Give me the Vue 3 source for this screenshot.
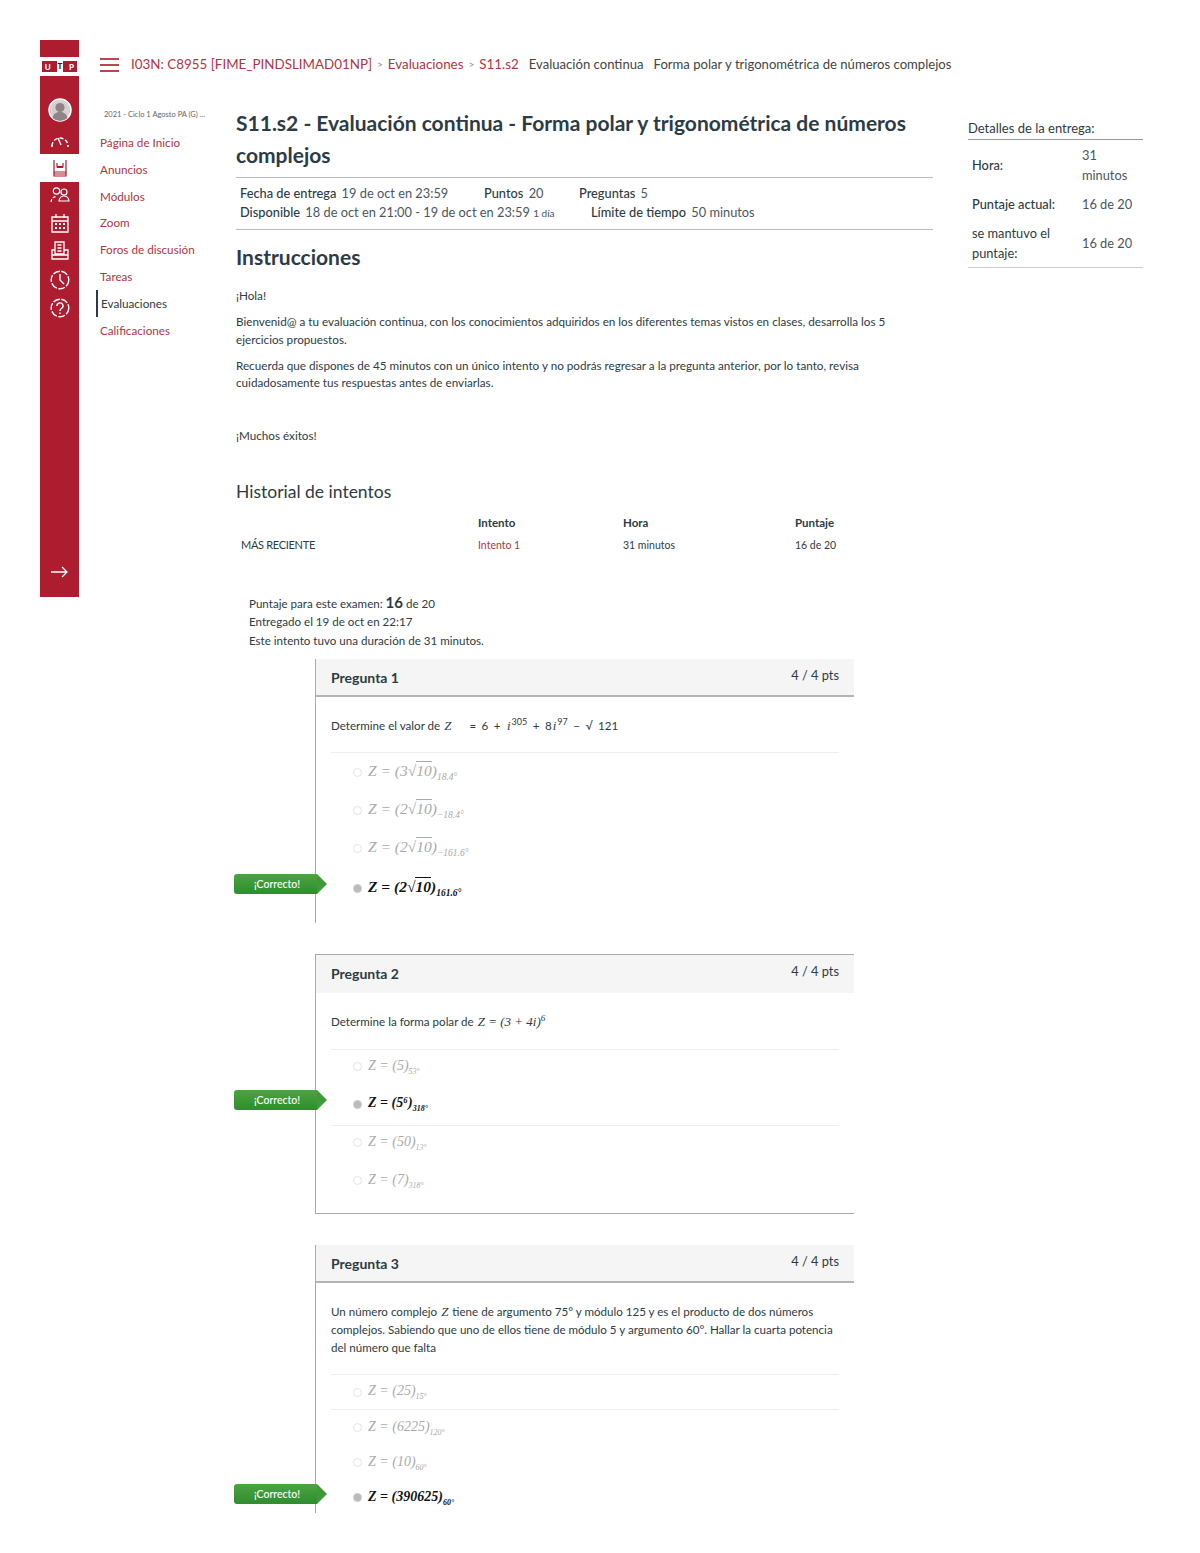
<script setup>
const navLinks = [
  { label: 'Página de Inicio' },
  { label: 'Anuncios' },
  { label: 'Módulos' },
  { label: 'Zoom' },
  { label: 'Foros de discusión' },
  { label: 'Tareas' },
  { label: 'Evaluaciones', active: true },
  { label: 'Calificaciones' }
];

const questions = [
  {
    title: 'Pregunta 1',
    bodyHeight: 56,
    rowHeight: 38,
    boxed: false,
    large: true,
    height: 264,
    options: [
      { coef: '3', rad: '10', sub: '18.4°' },
      { coef: '2', rad: '10', sub: '−18.4°' },
      { coef: '2', rad: '10', sub: '−161.6°' },
      { coef: '2', rad: '10', sub: '161.6°', correct: true }
    ]
  },
  {
    title: 'Pregunta 2',
    bodyHeight: 57,
    rowHeight: 38,
    boxed: true,
    lifted: true,
    height: 260,
    options: [
      { base: '5', sub: '53°' },
      { base: '5⁶', sub: '318°', correct: true, ruled: true },
      { base: '50', sub: '13°' },
      { base: '7', sub: '318°' }
    ]
  },
  {
    title: 'Pregunta 3',
    bodyHeight: 92,
    rowHeight: 35,
    boxed: false,
    height: 268,
    options: [
      { base: '25', sub: '15°', ruled: true },
      { base: '6225', sub: '120°' },
      { base: '10', sub: '60°' },
      { base: '390625', sub: '60°', correct: true }
    ]
  }
];
</script>

<template>
  <div class="page">
    <aside class="rail">
      <div class="rail-top"></div>
      <div class="rail-logo">
        <div class="utp"><span>U</span><span class="utp-t">T</span><span>P</span></div>
      </div>
      <div class="rail-red rail-first">
        <svg class="avatar" width="24" height="24" viewBox="0 0 24 24">
          <circle cx="12" cy="12" r="11" fill="#d9cdcf" stroke="#fff" stroke-width="1.5" />
          <circle cx="12" cy="9.5" r="4.6" fill="#8d8486" />
          <path d="M4.5 20c1-4.5 4-6 7.5-6s6.500 1.500 7.500 6a11 11 0 0 1-15 0z" fill="#8d8486" />
        </svg>
        <svg class="dash" width="20" height="16" viewBox="0 0 20 16" fill="none" stroke="#fff" stroke-width="1.400">
          <path d="M2 13a8 8 0 0 1 16 0" stroke-dasharray="4 2" />
          <path d="M8 5l3 7M1 13h2M17 13h2" />
        </svg>
      </div>
      <div class="rail-active">
        <svg width="16" height="19" viewBox="0 0 16 19" fill="none" stroke="#ae1c2f" stroke-width="1.200">
          <path d="M2 1v12h12V1M5 4v4h6V4" />
          <path d="M2 13v4h12v-4M2 15h12" />
          <path d="M5 8h6" stroke-width="2" />
        </svg>
      </div>
      <div class="rail-red rail-rest">
        <div class="rail-icons">
          <svg width="20" height="18" viewBox="0 0 20 18" fill="none" stroke="#fff" stroke-width="1.200">
            <circle cx="6.500" cy="5" r="3.200" />
            <path d="M1 16c.5-4 3-5.500 5.500-5.500" stroke-dasharray="3 1.500" />
            <circle cx="14" cy="6" r="3" />
            <path d="M9 15c.5-3.500 2.500-5 5-5s4.500 1.500 5 5z" />
          </svg>
          <svg width="20" height="20" viewBox="0 0 20 20" fill="none" stroke="#fff" stroke-width="1.300">
            <path d="M2 4h16v15H2zM2 8h16M6 1v4M14 1v4" />
            <path d="M5 11h2M9 11h2M13 11h2M5 15h2M9 15h2M13 15h2" stroke-width="2" />
          </svg>
          <svg width="20" height="20" viewBox="0 0 20 20" fill="none" stroke="#fff" stroke-width="1.300">
            <path d="M5 1h9v12H5zM7.500 4h4M7.500 7h4M7.500 10h4" />
            <path d="M5 9H2v9h16V9h-4M2 14h16" />
          </svg>
          <svg width="20" height="20" viewBox="0 0 20 20" fill="none" stroke="#fff" stroke-width="1.400">
            <circle cx="10" cy="10" r="8.800" stroke-dasharray="7 1.500" />
            <path d="M10 4v6l4 4" />
          </svg>
          <svg width="20" height="20" viewBox="0 0 20 20" fill="none" stroke="#fff" stroke-width="1.400">
            <circle cx="10" cy="10" r="8.800" stroke-dasharray="7 1.500" />
            <path d="M7 8a3 3 0 1 1 4.500 2.500c-1 .6-1.500 1.200-1.500 2.500M10 14.500v1.500" />
          </svg>
        </div>
        <svg class="collapse" width="18" height="14" viewBox="0 0 18 14" fill="none" stroke="#fff" stroke-width="1.300">
          <path d="M0 7h16M11 2l5 5-5 5" />
        </svg>
      </div>
    </aside>

    <div class="content">
      <header class="topbar">
        <div class="burger"><i></i><i></i><i></i></div>
        <div class="crumbs">
          <span>I03N: C8955 [FIME_PINDSLIMAD01NP]</span>
          <span class="sep">&gt;</span>
          <span>Evaluaciones</span>
          <span class="sep">&gt;</span>
          <span>S11.s2</span>
          <span class="dark">Evaluación continua</span>
          <span class="dark">Forma polar y trigonométrica de números complejos</span>
        </div>
      </header>

      <div class="columns">
        <nav class="nav">
          <div class="term">2021 - Ciclo 1 Agosto PA (G) ...</div>
          <a v-for="link in navLinks" :key="link.label" class="nav-link" :class="{ active: link.active }">{{ link.label }}</a>
        </nav>

        <main class="main">
          <h1>S11.s2 - Evaluación continua - Forma polar y trigonométrica de números complejos</h1>
          <div class="meta">
            <div class="meta-row">
              <span class="m1"><b>Fecha de entrega</b> 19 de oct en 23:59</span>
              <span class="m2"><b>Puntos</b> 20</span>
              <span><b>Preguntas</b> 5</span>
            </div>
            <div class="meta-row">
              <span class="m3"><b>Disponible</b> 18 de oct en 21:00 - 19 de oct en 23:59 <small>1 día</small></span>
              <span><b>Límite de tiempo</b> 50 minutos</span>
            </div>
          </div>

          <h2>Instrucciones</h2>
          <div class="instructions">
            <p>¡Hola!</p>
            <p>Bienvenid@ a tu evaluación continua, con los conocimientos adquiridos en los diferentes temas vistos en clases, desarrolla los 5 ejercicios propuestos.</p>
            <p>Recuerda que dispones de 45 minutos con un único intento y no podrás regresar a la pregunta anterior, por lo tanto, revisa cuidadosamente tus respuestas antes de enviarlas.</p>
            <p class="luck">¡Muchos éxitos!</p>
          </div>

          <h3>Historial de intentos</h3>
          <div class="history">
            <div class="history-row head">
              <span></span><span>Intento</span><span>Hora</span><span>Puntaje</span>
            </div>
            <div class="history-row">
              <span class="recent">MÁS RECIENTE</span>
              <span class="attempt">Intento 1</span>
              <span>31 minutos</span>
              <span>16 de 20</span>
            </div>
          </div>

          <div class="summary">
            <div>Puntaje para este examen: <strong>16</strong> de 20</div>
            <div>Entregado el 19 de oct en 22:17</div>
            <div>Este intento tuvo una duración de 31 minutos.</div>
          </div>

          <section
            v-for="q in questions"
            :key="q.title"
            class="question"
            :class="{ boxed: q.boxed, large: q.large, lifted: q.lifted }"
            :style="{ height: q.height + 'px' }"
          >
            <div class="q-head">
              <span class="q-title">{{ q.title }}</span>
              <span class="q-pts">4 / 4 pts</span>
            </div>
            <div class="q-text" :style="{ height: q.bodyHeight + 'px' }">
              <template v-if="q.title === 'Pregunta 1'">
                Determine el valor de <i class="math">Z</i> <span class="spread">= 6 + <i class="math">i</i><sup>305</sup> + 8<i class="math">i</i><sup>97</sup> − √ 121</span>
              </template>
              <template v-else-if="q.title === 'Pregunta 2'">
                Determine la forma polar de <i class="math">Z = (3 + 4i)<sup>6</sup></i>
              </template>
              <template v-else>
                <div>Un número complejo <i class="math">Z</i> tiene de argumento 75° y módulo 125 y es el producto de dos números</div>
                <div>complejos. Sabiendo que uno de ellos tiene de módulo 5 y argumento 60°. Hallar la cuarta potencia del número que falta</div>
              </template>
            </div>
            <div
              v-for="opt in q.options"
              :key="(opt.base || opt.coef) + opt.sub"
              class="option"
              :class="{ correct: opt.correct, ruled: opt.ruled }"
              :style="{ height: q.rowHeight + 'px' }"
            >
              <span v-if="opt.correct" class="flag">¡Correcto!</span>
              <span class="radio"></span>
              <span class="expr">
                Z = (<template v-if="opt.rad">{{ opt.coef }}√<span class="radicand">{{ opt.rad }}</span></template><template v-else>{{ opt.base }}</template>)<sub>{{ opt.sub }}</sub>
              </span>
            </div>
          </section>
        </main>

        <aside class="details">
          <div class="details-title">Detalles de la entrega:</div>
          <div class="details-grid">
            <b>Hora:</b>
            <span>31 minutos</span>
            <b>Puntaje actual:</b>
            <span>16 de 20</span>
            <b class="kept">se mantuvo el puntaje:</b>
            <span>16 de 20</span>
          </div>
        </aside>
      </div>
    </div>
  </div>
</template>

<style>
html, body {
  background: #fff;
}
</style>

<style scoped>
.page {
  display: flex;
  align-items: flex-start;
  box-sizing: border-box;
  width: 1200px;
  height: 1553px;
  overflow: hidden;
  padding: 40px 0 0 40px;
  font-family: Lato, "Open Sans", sans-serif;
  font-size: 12px;
  color: #2d3b45;
}

.rail {
  flex: none;
  display: flex;
  flex-direction: column;
  width: 39px;
  height: 557px;
}

.rail-top {
  height: 17px;
  background: #ae1c2f;
}

.rail-logo {
  display: flex;
  align-items: center;
  height: 19px;
}

.utp {
  display: flex;
  justify-content: space-around;
  align-items: center;
  width: 35px;
  height: 11px;
  margin: 0 auto;
  background: #ae1c2f;
  color: #fff;
  font-size: 8px;
  font-weight: 900;
}

.utp-t {
  background: #fff;
  color: #222;
  padding: 0 1px;
  line-height: 11px;
}

.rail-red {
  background: #ae1c2f;
  display: flex;
  flex-direction: column;
  align-items: center;
}

.rail-first {
  height: 78px;
  padding-top: 22px;
  box-sizing: border-box;
}

.avatar {
  margin-bottom: 11px;
}

.rail-active {
  display: flex;
  align-items: center;
  justify-content: center;
  height: 28px;
}

.rail-rest {
  flex: 1;
  justify-content: space-between;
  padding: 4px 0 18px;
}

.rail-icons {
  display: flex;
  flex-direction: column;
  align-items: center;
  gap: 8.500px;
}

.content {
  flex: 1;
  min-width: 0;
}

.topbar {
  display: flex;
  align-items: center;
  height: 50px;
  padding-left: 21px;
}

.burger {
  display: flex;
  flex-direction: column;
  gap: 4px;
  width: 19px;
  margin-right: 12px;
}

.burger i {
  display: block;
  height: 2px;
  background: #b9474f;
}

.crumbs {
  display: flex;
  gap: 5px;
  font-size: 13.400px;
  line-height: 16px;
  margin-top: -2px;
  white-space: nowrap;
  color: #b3343f;
}

.sep {
  color: #888;
  font-size: 10px;
}

.dark {
  color: #444;
  font-size: 13.100px;
  margin-left: 5px;
}

.columns {
  display: flex;
  align-items: flex-start;
}

.nav {
  flex: none;
  box-sizing: border-box;
  width: 140px;
  margin-left: 17px;
  padding-top: 18px;
}

.term {
  height: 21px;
  padding-left: 8px;
  font-size: 7.500px;
  line-height: 14px;
  color: #666;
}

.nav-link {
  display: block;
  height: 26.800px;
  padding-left: 4px;
  font-size: 11.700px;
  line-height: 26px;
  color: #b3343f;
}

.nav-link.active {
  border-left: 2px solid #2d3b45;
  padding-left: 3px;
  color: #2d3b45;
}

.main {
  flex: none;
  width: 697px;
}

h1 {
  margin: 17px 0 0;
  padding-bottom: 6px;
  border-bottom: 1px solid #bbb;
  font-size: 21px;
  font-weight: 700;
  line-height: 32px;
}

.meta {
  padding: 6px 4px 6px;
  border-bottom: 1px solid #bbb;
  line-height: 19px;
  font-size: 12.800px;
  color: #4a565f;
}

.meta b {
  color: #2d3b45;
  font-weight: 500;
  margin-right: 2px;
}

.meta small {
  font-size: 10px;
}

.meta-row {
  display: flex;
}

.m1 {
  width: 244px;
}

.m2 {
  width: 95px;
}

.m3 {
  width: 351px;
}

h2 {
  margin: 14px 0 0;
  font-size: 21px;
  font-weight: 700;
  line-height: 26px;
}

.instructions {
  margin-top: 17px;
  font-size: 11.700px;
  line-height: 17.500px;
}

.instructions p {
  margin: 0 40px 8.500px 0;
}

.luck {
  padding-top: 27px;
}

h3 {
  margin: 34px 0 0;
  font-size: 17.500px;
  font-weight: 400;
  line-height: 26px;
}

.history {
  margin-top: 7px;
  font-size: 10.500px;
}

.history-row {
  display: grid;
  grid-template-columns: 237px 145px 172px 1fr;
  height: 22px;
  padding-left: 5px;
  line-height: 22px;
}

.head {
  font-size: 11.500px;
  font-weight: 700;
}

.recent {
  font-size: 11px;
  letter-spacing: -.3px;
}

.attempt {
  color: #b3343f;
}

.summary {
  margin-top: 37px;
  padding-left: 13px;
  font-size: 11.600px;
  line-height: 18.500px;
}

.summary strong {
  font-size: 15px;
}

.question {
  box-sizing: border-box;
  width: 539px;
  margin: 9px 0 31px 79px;
  border-left: 1px solid #aaa;
}

.question + .question {
  margin-top: 0;
}

.question.boxed {
  border: 1px solid #aaa;
  border-right: 0;
  border-width: 1.500px 0 1.500px 1px;
}

.q-head {
  display: flex;
  justify-content: space-between;
  height: 38px;
  box-sizing: border-box;
  padding: 8px 15px 0;
  background: #f5f5f5;
  border-bottom: 2px solid #b4b4b4;
}

.boxed .q-head {
  border-bottom: 0;
}

.q-title {
  font-size: 14px;
  font-weight: 700;
  line-height: 22px;
}

.q-pts {
  font-size: 12.800px;
  line-height: 16px;
}

.q-text {
  box-sizing: border-box;
  margin: 0 15px;
  padding-top: 20px;
  border-bottom: 1px solid #eee;
  font-size: 11.600px;
  line-height: 18px;
}

.math {
  font-family: "Liberation Serif", serif;
  font-size: 13px;
  margin: 0 1px;
}

.spread {
  word-spacing: 2.500px;
  margin-left: 14px;
}

.q-text sup {
  font-size: 9px;
  line-height: 0;
}

.option {
  position: relative;
  display: flex;
  align-items: center;
  box-sizing: border-box;
  margin: 0 15px;
  padding-left: 22px;
  font-family: "Liberation Serif", serif;
  font-size: 14px;
  font-style: italic;
  color: #aaa;
}

.lifted .option {
  padding-bottom: 5px;
}

.large .option {
  font-size: 15.500px;
}

.large .option sub {
  font-size: 9.500px;
}

.large .option.correct {
  top: 2px;
}

.option.ruled {
  border-bottom: 1px solid #eee;
}

.option.correct {
  color: #111;
  font-weight: 700;
}

.radio {
  width: 7px;
  height: 7px;
  margin-right: 6px;
  border: 1px solid #e4e4e4;
  border-radius: 50%;
}

.correct .radio {
  background: #bbb;
  border-color: #ccc;
}

.radicand {
  border-top: 1px solid currentColor;
}

.expr sub {
  font-size: 8px;
}

.flag {
  position: absolute;
  left: -97px;
  top: calc(50% - 14px);
  display: block;
  box-sizing: border-box;
  width: 83px;
  height: 20px;
  padding-left: 3px;
  border-radius: 3px 0 0 3px;
  background: linear-gradient(#4ba63f, #2f8c2f);
  color: #fff;
  font-family: Lato, sans-serif;
  font-size: 10.500px;
  font-style: normal;
  font-weight: 500;
  line-height: 20px;
  text-align: center;
}

.flag::after {
  content: "";
  position: absolute;
  left: 83px;
  top: 0;
  border-left: 10px solid #3d9a37;
  border-top: 10px solid transparent;
  border-bottom: 10px solid transparent;
}

.lifted .flag {
  top: calc(50% - 16.500px);
}

.details {
  flex: none;
  width: 175px;
  margin: 29px 0 0 35px;
}

.details-title {
  padding-bottom: 1px;
  border-bottom: 1.500px solid #999;
  font-size: 13px;
  line-height: 19px;
}

.details-grid {
  display: grid;
  grid-template-columns: 110px 55px;
  align-items: center;
  padding: 0 4px;
  border-bottom: 1px solid #ccc;
  font-size: 12.800px;
  line-height: 20px;
  color: #4a565f;
}

.details-grid > * {
  padding: 4.500px 0;
}

.details-grid b {
  color: #2d3b45;
  font-weight: 500;
}

.details-grid .kept {
  font-weight: 400;
}
</style>
